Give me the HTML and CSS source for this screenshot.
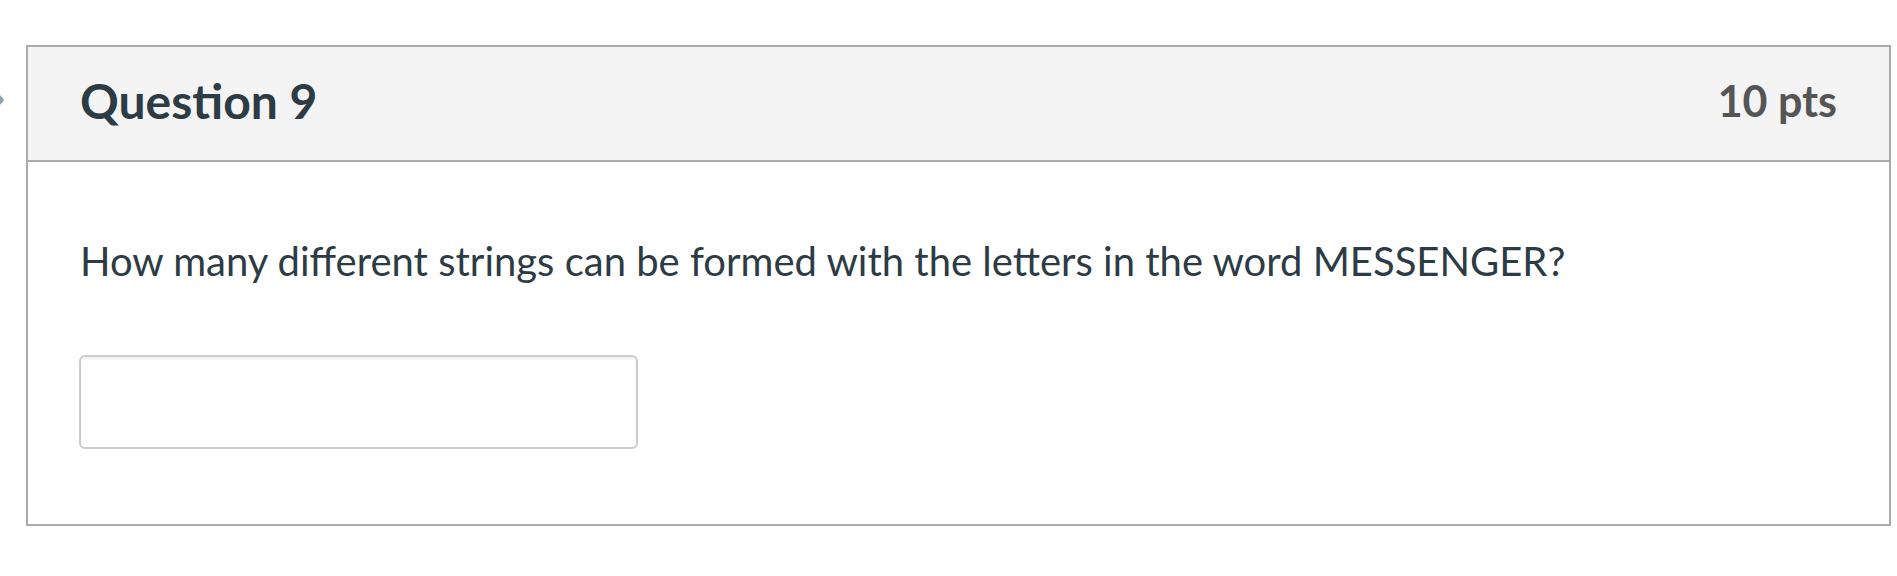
FILE: index.html
```html
<!DOCTYPE html>
<html lang="en">
<head>
<meta charset="utf-8">
<title>Question 9</title>
<link rel="stylesheet" href="styles.css">
</head>
<body>
<div class="page">
  <span class="flag-tip" aria-hidden="true"></span>
  <section class="question">
    <header class="question-header">
      <h2 class="question-title">Question 9</h2>
      <span class="question-points">10 pts</span>
    </header>
    <div class="question-body">
      <p class="question-text">How many different strings can be formed with the letters in the word MESSENGER?</p>
      <input class="answer-input" type="text" aria-label="Answer">
    </div>
  </section>
</div>
</body>
</html>
```

FILE: styles.css
```css
html, body {
  margin: 0;
  padding: 0;
  background: #ffffff;
}

body {
  font-family: Lato, "Open Sans", "Liberation Sans", sans-serif;
  color: #2d3b45;
}

.page {
  position: relative;
  padding: 45px 6px 0 26px;
}

.flag-tip {
  position: absolute;
  left: -12px;
  top: 93px;
  width: 14px;
  height: 14px;
  background: #8e9fb8;
  transform: rotate(45deg);
  border-radius: 3px;
}

.question {
  border: 2px solid #aaaaaa;
  background: #ffffff;
}

.question-header {
  display: flex;
  justify-content: space-between;
  align-items: baseline;
  background: #f4f4f4;
  border-bottom: 2px solid #aaaaaa;
  padding: 25px 52px 0 52px;
  height: 88px;
}

.question-title {
  margin: 0;
  font-size: 48px;
  font-weight: 700;
  line-height: 1.2;
  color: #2d3b45;
}

.question-points {
  font-size: 43px;
  font-weight: 700;
  line-height: 1.2;
  color: #555555;
  position: relative;
  top: -2px;
}

.question-body {
  padding: 75px 52px 75px 51px;
}

.question-text {
  margin: 0 0 70px 1px;
  font-size: 40px;
  line-height: 1.2;
  color: #2d3b45;
}

.answer-input {
  display: block;
  box-sizing: border-box;
  width: 559px;
  height: 94px;
  margin: 0;
  border: 2px solid #cccccc;
  border-radius: 6px;
  background: #ffffff;
  box-shadow: inset 0 2px 3px rgba(0, 0, 0, 0.06);
  font-family: inherit;
  font-size: 36px;
  padding: 0 16px;
  outline: none;
}
```
